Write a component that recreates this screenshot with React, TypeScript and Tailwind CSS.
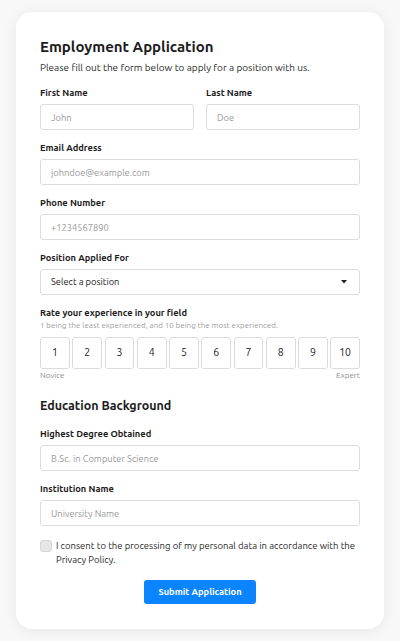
import React, { useState } from "react";

const inputCls =
    "w-full h-[26px] px-[10px] rounded-[3px] border border-[#dcdcdc] bg-white text-[9.3px] text-[#222] placeholder:text-[#9a9a9a] outline-none";

function Field({ label, placeholder, className = "" }: { label: string; placeholder: string; className?: string }) {
    return (
        <div className={`flex flex-col ${className}`}>
            <label className="text-[9.3px] leading-[12px] font-bold text-[#1c1c1c]">{label}</label>
            <input className={`mt-[5px] ${inputCls}`} placeholder={placeholder} />
        </div>
    );
}

export default function App() {
    const [rating, setRating] = useState<number | null>(null);
    const [agree, setAgree] = useState(false);

    return (
        <div className="min-h-screen bg-[#f8f8f8] px-4 py-3 font-['Ubuntu','Noto_Sans',sans-serif]">
            <div className="bg-white rounded-2xl shadow-[0_2px_14px_rgba(0,0,0,0.07)] px-6 pt-6 pb-[25px]">
                {/* Header */}
                <h1 className="mt-px text-[15px] leading-[20px] font-bold text-[#1c1c1c]">Employment Application</h1>
                <p className="mt-[4px] text-[10px] leading-[14px] text-[#2a2a2a]">
                    Please fill out the form below to apply for a position with us.
                </p>

                {/* Name */}
                <div className="mt-3 grid grid-cols-2 gap-3">
                    <Field label="First Name" placeholder="John" />
                    <Field label="Last Name" placeholder="Doe" />
                </div>

                <Field className="mt-3" label="Email Address" placeholder="johndoe@example.com" />
                <Field className="mt-3" label="Phone Number" placeholder="+1234567890" />

                {/* Position */}
                <div className="mt-3 flex flex-col">
                    <label className="text-[9.3px] leading-[12px] font-bold text-[#1c1c1c]">Position Applied For</label>
                    <div className="mt-[5px] h-[26px] px-[10px] rounded-[3px] border border-[#dcdcdc] flex items-center justify-between">
                        <span className="text-[9.3px] text-[#222]">Select a position</span>
                        <svg width="6" height="3.5" viewBox="0 0 6 3.5" className="mr-[2px]">
                            <path d="M0 0h6L3 3.5z" fill="#222" />
                        </svg>
                    </div>
                </div>

                {/* Rating */}
                <div className="mt-3">
                    <div className="text-[9.3px] leading-[12px] font-bold text-[#1c1c1c]">Rate your experience in your field</div>
                    <div className="mt-px text-[8px] leading-[12px] text-[#a0a0a0]">
                        1 being the least experienced, and 10 being the most experienced.
                    </div>
                    <div className="mt-[5px] grid grid-cols-10 gap-[2.5px]">
                        {Array.from({ length: 10 }, (_, i) => i + 1).map((n) => (
                            <button
                                key={n}
                                onClick={() => setRating(n)}
                                className={`h-[32px] rounded-[3px] border text-[10.5px] text-[#222] flex items-center justify-center ${
                                    rating === n ? "border-[#0a84ff] bg-[#eaf4ff]" : "border-[#dcdcdc] bg-white"
                                }`}
                            >
                                {n}
                            </button>
                        ))}
                    </div>
                    <div className="mt-px flex justify-between text-[8px] leading-[12px] text-[#8f8f8f]">
                        <span>Novice</span>
                        <span>Expert</span>
                    </div>
                </div>

                {/* Education */}
                <h2 className="mt-[15px] text-[12.5px] leading-[16px] font-bold text-[#1c1c1c]">Education Background</h2>
                <Field className="mt-[15px]" label="Highest Degree Obtained" placeholder="B.Sc. in Computer Science" />
                <Field className="mt-3" label="Institution Name" placeholder="University Name" />

                {/* Consent */}
                <label className="mt-[13px] flex items-start gap-[4px] cursor-pointer">
                    <span
                        onClick={() => setAgree(!agree)}
                        className={`mt-px shrink-0 w-[12px] h-[12px] rounded-[3px] border ${
                            agree ? "bg-[#0a84ff] border-[#0a84ff]" : "bg-[#e6e6e6] border-[#d6d6d6]"
                        }`}
                    />
                    <span className="text-[9.5px] leading-[14px] text-[#2a2a2a]">
                        I consent to the processing of my personal data in accordance with the Privacy Policy.
                    </span>
                </label>

                {/* Submit */}
                <div className="mt-[13px] flex justify-center">
                    <button className="h-[24px] w-[112px] rounded-[3px] bg-[#0a84ff] text-white text-[9.3px] font-bold">
                        Submit Application
                    </button>
                </div>
            </div>
        </div>
    );
}
